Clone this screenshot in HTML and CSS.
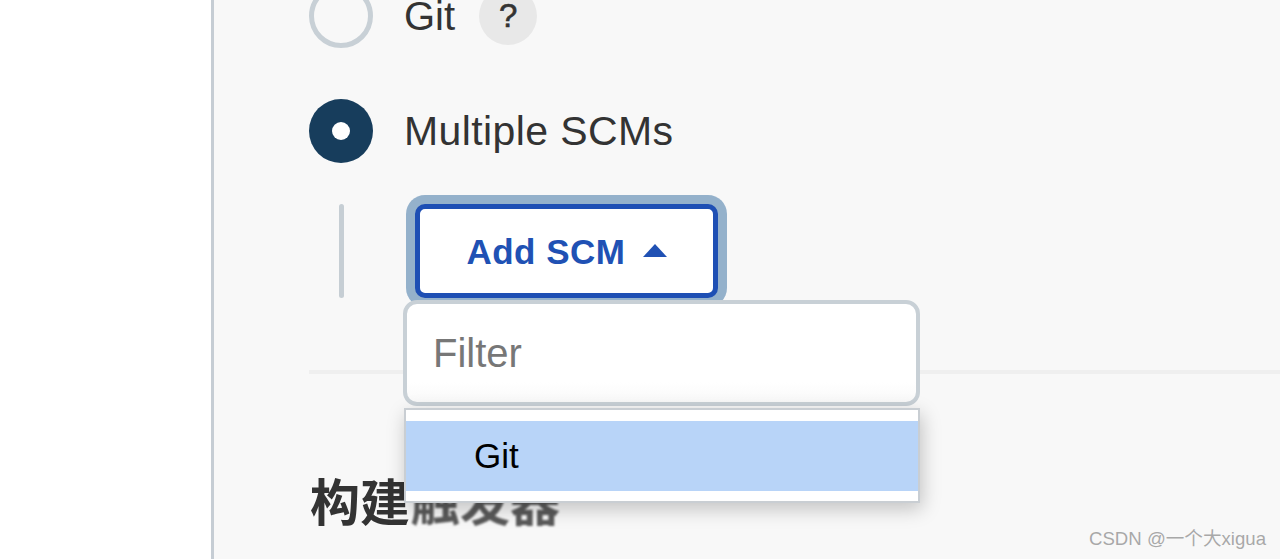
FILE: index.html
```html
<!DOCTYPE html>
<html lang="zh-CN">
<head>
<meta charset="utf-8">
<title>Multiple SCMs</title>
<link rel="stylesheet" href="styles.css">
</head>
<body>
<div class="page">
  <aside class="sidebar"></aside>
  <main class="main">
    <div class="radio-row first">
      <span class="radio"></span>
      <span class="radio-label">Git</span>
      <span class="help">?</span>
    </div>
    <div class="radio-row second">
      <span class="radio checked"><span class="dot"></span></span>
      <span class="radio-label wide">Multiple SCMs</span>
    </div>
    <div class="nested">
      <span class="nest-line"></span>
      <div class="btn-wrap">
        <button class="add-btn" type="button">
          <span>Add SCM</span>
          <svg class="caret" width="24" height="13" viewBox="0 0 24 13"><path d="M12 0 L24 13 L0 13 Z" fill="#2051b4"/></svg>
        </button>
        <div class="dropdown">
          <div class="filter"><span class="placeholder">Filter</span></div>
          <ul class="menu">
            <li class="menu-item active">Git</li>
          </ul>
        </div>
      </div>
    </div>
    <div class="separator"></div>
    <h2 class="section-title">构建<span class="faded">触发器</span></h2>
  </main>
  <div class="watermark">CSDN @一个大xigua</div>
</div>
</body>
</html>
```

FILE: styles.css
```css
html, body {
  margin: 0;
  padding: 0;
  height: 100%;
}
body {
  background: #f8f8f8;
  font-family: "Liberation Sans", Arial, "Noto Sans CJK SC", sans-serif;
  color: #333;
  overflow: hidden;
}
.page {
  display: flex;
  height: 559px;
  position: relative;
  overflow: hidden;
}
.sidebar {
  width: 211px;
  flex: 0 0 211px;
  background: #ffffff;
  border-right: 3px solid #c6cdd4;
}
.main {
  flex: 1;
  padding-left: 95px;
  margin-top: -16px;
}
.radio-row {
  display: flex;
  align-items: center;
  height: 64px;
}
.radio-row.second {
  margin-top: 51px;
}
.radio {
  box-sizing: border-box;
  width: 64px;
  height: 64px;
  border-radius: 50%;
  border: 5px solid #c8d0d6;
  background: #f8f8f8;
  display: flex;
  align-items: center;
  justify-content: center;
  flex: 0 0 64px;
}
.radio.checked {
  border: none;
  background: #173d5c;
}
.dot {
  width: 18px;
  height: 18px;
  border-radius: 50%;
  background: #ffffff;
}
.radio-label {
  margin-left: 31px;
  font-size: 40px;
  color: #333;
}
.radio-label.wide {
  font-size: 41px;
  letter-spacing: 0.4px;
}
.help {
  margin-left: 24px;
  width: 58px;
  height: 58px;
  border-radius: 50%;
  background: #e8e8e8;
  display: flex;
  align-items: center;
  justify-content: center;
  font-weight: normal;
  font-size: 33px;
  color: #333;
  -webkit-text-stroke: 0.6px #333;
}
.nested {
  display: flex;
  margin-top: 41px;
  margin-left: 30px;
}
.nest-line {
  width: 5px;
  height: 94px;
  border-radius: 3px;
  background: #c6ced4;
}
.btn-wrap {
  position: relative;
  margin-left: 71px;
}
.add-btn {
  box-sizing: border-box;
  width: 303px;
  height: 94px;
  border: 5px solid #1e4fb4;
  border-radius: 10px;
  background: #ffffff;
  box-shadow: 0 0 0 9px #94b1cb;
  display: flex;
  align-items: center;
  justify-content: center;
  gap: 17px;
  font-family: "Liberation Sans", Arial, sans-serif;
  font-weight: bold;
  font-size: 35px;
  letter-spacing: 0.5px;
  color: #2051b4;
  padding: 2px 0 0 0;
  cursor: pointer;
}
.caret {
  display: block;
  margin-top: -4px;
}
.dropdown {
  position: absolute;
  left: -12px;
  top: 96px;
  width: 517px;
  z-index: 5;
}
.filter {
  box-sizing: border-box;
  height: 106px;
  border: 4px solid #c8d0d6;
  border-radius: 14px;
  background: linear-gradient(#ffffff 80%, #f9f9f9);
  display: flex;
  align-items: center;
  padding-left: 26px;
}
.placeholder {
  font-size: 40px;
  color: #777;
  margin-top: 0;
}
.menu {
  list-style: none;
  margin: 2px 0 0 1px;
  padding: 11px 0 10px 0;
  background: #ffffff;
  border: 2px solid #c9ced3;
  box-shadow: 2px 6px 18px rgba(0, 0, 0, 0.22);
}
.menu-item {
  height: 70px;
  display: flex;
  align-items: center;
  padding-left: 68px;
  font-size: 35px;
  color: #000;
}
.menu-item.active {
  background: #b8d4f8;
}
.separator {
  margin-top: 72px;
  height: 4px;
  background: #efefef;
}
.section-title {
  margin: 95px 0 0 1px;
  font-family: "Noto Sans CJK SC", sans-serif;
  font-weight: bold;
  font-size: 50px;
  line-height: 60px;
  color: #333;
}
.faded {
  color: #5a5a5a;
  filter: blur(1.2px);
}
.watermark {
  position: absolute;
  right: 14px;
  bottom: 9px;
  font-family: "Liberation Sans", "Noto Sans CJK SC", sans-serif;
  font-size: 18.6px;
  color: #a8a8a8;
  text-shadow: 0 0 1px #ffffff;
}
```
